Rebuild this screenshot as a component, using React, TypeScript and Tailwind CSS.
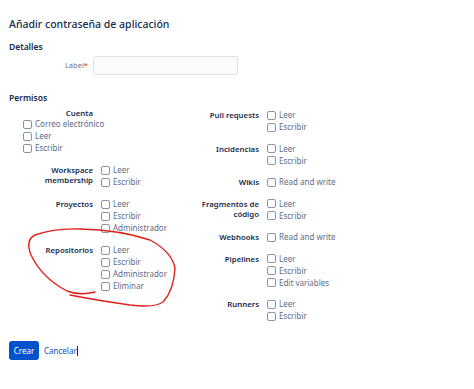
import React from 'react';

type Grupo = { label: string[]; opciones: string[] };

const izquierda: Grupo[] = [
  { label: ['Workspace', 'membership'], opciones: ['Leer', 'Escribir'] },
  { label: ['Proyectos'], opciones: ['Leer', 'Escribir', 'Administrador'] },
  { label: ['Repositorios'], opciones: ['Leer', 'Escribir', 'Administrador', 'Eliminar'] },
];

const derecha: Grupo[] = [
  { label: ['Pull requests'], opciones: ['Leer', 'Escribir'] },
  { label: ['Incidencias'], opciones: ['Leer', 'Escribir'] },
  { label: ['Wikis'], opciones: ['Read and write'] },
  { label: ['Fragmentos de', 'código'], opciones: ['Leer', 'Escribir'] },
  { label: ['Webhooks'], opciones: ['Read and write'] },
  { label: ['Pipelines'], opciones: ['Leer', 'Escribir', 'Edit variables'] },
  { label: ['Runners'], opciones: ['Leer', 'Escribir'] },
];

const Opcion: React.FC<{ texto: string }> = ({ texto }) => (
  <label className="flex items-center h-[12px] gap-[3px]">
    <span className="w-[9px] h-[9px] border border-[#8993a4] rounded-[2px] bg-white shrink-0" />
    <span className="text-[8px] text-[#5e6c84] whitespace-nowrap">{texto}</span>
  </label>
);

const GrupoPermisos: React.FC<{ grupo: Grupo }> = ({ grupo }) => (
  <div className="flex">
    <div className="w-[84px] text-right text-[7.8px] leading-[10px] font-semibold text-[#172b4d] pt-[1px]">
      {grupo.label.map(l => (
        <div key={l}>{l}</div>
      ))}
    </div>
    <div className="ml-[8px] flex flex-col">
      {grupo.opciones.map(o => (
        <Opcion key={o} texto={o} />
      ))}
    </div>
  </div>
);

export default function App() {
  return (
    <div
      className="relative w-[474px] h-[389px] bg-white overflow-hidden pl-[9px] pt-[16px]"
      style={{ fontFamily: '"Noto Sans", "Open Sans", sans-serif' }}
    >
      <h1 className="text-[10.5px] leading-[16px] font-medium text-[#172b4d]">Añadir contraseña de aplicación</h1>

      <h2 className="mt-[9px] text-[8.5px] leading-[12px] font-semibold text-[#172b4d]">Detalles</h2>

      <div className="mt-[3px] flex items-center">
        <div className="w-[79px] text-right text-[7.5px] text-[#6b778c]">
          Label<span className="text-[#de350b]">*</span>
        </div>
        <input className="ml-[5px] w-[145px] h-[19px] border border-[#dfe1e6] rounded-[3px] bg-[#fafbfc]" />
      </div>

      <h2 className="mt-[17px] text-[8.5px] leading-[12px] font-semibold text-[#172b4d]">Permisos</h2>

      <div className="grid grid-cols-[166px_1fr]">
        <div className="flex flex-col gap-[10px] pt-[4px]">
          <div>
            <div className="w-[84px] text-right text-[7.8px] leading-[10px] font-semibold text-[#172b4d]">Cuenta</div>
            <div className="ml-[14px] flex flex-col">
              <Opcion texto="Correo electrónico" />
              <Opcion texto="Leer" />
              <Opcion texto="Escribir" />
            </div>
          </div>
          {izquierda.map(g => (
            <GrupoPermisos key={g.label[0]} grupo={g} />
          ))}
        </div>
        <div className="flex flex-col gap-[9.5px] pt-[5px]">
          {derecha.map(g => (
            <GrupoPermisos key={g.label[0]} grupo={g} />
          ))}
        </div>
      </div>

      <div className="mt-[19px] flex items-center">
        <button className="w-[30px] h-[19px] rounded-[3px] bg-[#0052cc] text-white text-[8px]">Crear</button>
        <span className="ml-[5px] text-[8px] text-[#0052cc]">Cancelar</span>
        <span className="w-[1px] h-[10px] bg-[#172b4d]" />
      </div>

      {/* anotación a mano */}
      <svg className="absolute left-0 top-0 pointer-events-none" width="474" height="389">
        <path
          d="M95 292 Q80 296 67 291 Q42 278 31 255 Q25 240 35 235 Q55 228 80 229 Q120 230 150 240 Q172 252 175 268 Q174 290 163 302 Q155 308 130 305 Q95 300 70 295"
          fill="none"
          stroke="#e0201b"
          strokeWidth="1.4"
          strokeLinecap="round"
        />
      </svg>
    </div>
  );
}
